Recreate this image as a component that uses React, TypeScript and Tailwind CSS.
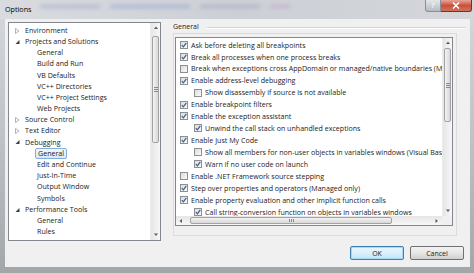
import React from 'react';

type TreeItem = {
  label: string;
  level: 0 | 1;
  state?: 'open' | 'closed';
  selected?: boolean;
};

const tree: TreeItem[] = [
  { label: 'Environment', level: 0, state: 'closed' },
  { label: 'Projects and Solutions', level: 0, state: 'open' },
  { label: 'General', level: 1 },
  { label: 'Build and Run', level: 1 },
  { label: 'VB Defaults', level: 1 },
  { label: 'VC++ Directories', level: 1 },
  { label: 'VC++ Project Settings', level: 1 },
  { label: 'Web Projects', level: 1 },
  { label: 'Source Control', level: 0, state: 'closed' },
  { label: 'Text Editor', level: 0, state: 'closed' },
  { label: 'Debugging', level: 0, state: 'open' },
  { label: 'General', level: 1, selected: true },
  { label: 'Edit and Continue', level: 1 },
  { label: 'Just-In-Time', level: 1 },
  { label: 'Output Window', level: 1 },
  { label: 'Symbols', level: 1 },
  { label: 'Performance Tools', level: 0, state: 'open' },
  { label: 'General', level: 1 },
  { label: 'Rules', level: 1 },
];

type Opt = { label: string; level: 0 | 1; checked: boolean };

const options: Opt[] = [
  { label: 'Ask before deleting all breakpoints', level: 0, checked: true },
  { label: 'Break all processes when one process breaks', level: 0, checked: true },
  { label: 'Break when exceptions cross AppDomain or managed/native boundaries (Managed only)', level: 0, checked: false },
  { label: 'Enable address-level debugging', level: 0, checked: true },
  { label: 'Show disassembly if source is not available', level: 1, checked: false },
  { label: 'Enable breakpoint filters', level: 0, checked: true },
  { label: 'Enable the exception assistant', level: 0, checked: true },
  { label: 'Unwind the call stack on unhandled exceptions', level: 1, checked: true },
  { label: 'Enable Just My Code', level: 0, checked: true },
  { label: 'Show all members for non-user objects in variables windows (Visual Basic only)', level: 1, checked: false },
  { label: 'Warn if no user code on launch', level: 1, checked: true },
  { label: 'Enable .NET Framework source stepping', level: 0, checked: false },
  { label: 'Step over properties and operators (Managed only)', level: 0, checked: true },
  { label: 'Enable property evaluation and other implicit function calls', level: 0, checked: true },
  { label: 'Call string-conversion function on objects in variables windows', level: 1, checked: true },
];

function Arrow({ dir }: { dir: 'up' | 'down' | 'left' | 'right' }) {
  const pts = {
    up: '1,4 3,1.5 5,4',
    down: '1,1.5 3,4 5,1.5',
    left: '4,1 1.5,3 4,5',
    right: '1.5,1 4,3 1.5,5',
  }[dir];
  return (
    <svg width="6" height="6" viewBox="0 0 6 6">
      <polygon points={pts} fill="#5a5a5a" />
    </svg>
  );
}

function VScroll({ thumbTop, thumbH }: { thumbTop: number; thumbH: number }) {
  return (
    <div className="relative w-[10px] h-full bg-gradient-to-r from-[#e6e6e6] to-[#f7f7f7] border-l border-[#ececec]">
      <div className="h-[10px] flex items-center justify-center">
        <Arrow dir="up" />
      </div>
      <div
        className="absolute left-[1px] right-[1px] rounded-[2px] border border-[#a2a2a2] bg-gradient-to-r from-[#f4f4f4] to-[#d8d8d8] flex items-center justify-center"
        style={{ top: thumbTop, height: thumbH }}
      >
        <div className="flex flex-col gap-[1px]">
          <div className="w-[4px] h-px bg-[#8a8a8a]" />
          <div className="w-[4px] h-px bg-[#8a8a8a]" />
          <div className="w-[4px] h-px bg-[#8a8a8a]" />
        </div>
      </div>
      <div className="absolute bottom-0 left-0 right-0 h-[10px] flex items-center justify-center">
        <Arrow dir="down" />
      </div>
    </div>
  );
}

function CheckBox({ checked }: { checked: boolean }) {
  return (
    <div className="w-[8px] h-[8px] border border-[#8f8f8f] bg-gradient-to-br from-[#d8dbe0] to-[#fbfbfb] flex items-center justify-center shrink-0">
      {checked && (
        <svg width="6" height="6" viewBox="0 0 6 6">
          <path d="M0.8 3.2 L2.4 4.9 L5.3 0.9" stroke="#3e5a8e" strokeWidth="1.2" fill="none" />
        </svg>
      )}
    </div>
  );
}

export default function App() {
  return (
    <div className="w-[474px] h-[273px] overflow-hidden flex flex-col bg-gradient-to-b from-[#d5d8dc] via-[#bfc3c7] to-[#a3a6a9] font-['Open_Sans',sans-serif] text-[7.1px] text-[#1b1b1b]">
      {/* title bar */}
      <div className="h-[19px] shrink-0 flex items-start relative bg-gradient-to-r from-[#d9dbdf] via-[#ccd0d6] to-[#d4d6da]">
        <span className="pl-[5px] pt-[4px] text-[7.2px] text-black">Options</span>
        <div className="absolute top-0 left-[40px] h-[12px] w-[300px] blur-[2px] opacity-40 flex gap-[10px] items-center">
          <div className="w-[60px] h-[3px] bg-[#7a86b8]" />
          <div className="w-[80px] h-[3px] bg-[#6f7fc0]" />
          <div className="w-[60px] h-[3px] bg-[#8a7ab0]" />
          <div className="w-[20px] h-[3px] bg-[#c07ac0]" />
        </div>
        <div className="ml-auto mr-[2px] flex">
          <div className="w-[16px] h-[12px] rounded-bl-[3px] border border-[#8a8f96] border-t-0 bg-gradient-to-b from-[#e4e7ea] to-[#b6bcc3] flex items-center justify-center text-[7px] font-bold text-[#f4f4f4] leading-none">
            ?
          </div>
          <div className="w-[31px] h-[12px] rounded-br-[3px] border border-[#7a2d25] border-t-0 border-l-0 bg-gradient-to-b from-[#e8a494] via-[#c8503e] to-[#d2715a] flex items-center justify-center">
            <svg width="8" height="7" viewBox="0 0 8 7">
              <path d="M1 0.5 L7 6.5 M7 0.5 L1 6.5" stroke="#ffffff" strokeWidth="1.6" />
            </svg>
          </div>
        </div>
      </div>

      {/* client */}
      <div className="flex-1 mx-[4px] ml-[5px] bg-[#f0f0f0] flex flex-col">
        <div className="flex items-start">
          {/* tree */}
          <div className="ml-[3px] mt-[3px] w-[153px] h-[219px] border border-[#828790] bg-white flex">
            <div className="flex-1 pt-[1.5px] relative">
              {tree.map((t, i) => (
                <div key={i} className="h-[11.2px] flex items-center relative">
                  {t.level === 0 && (
                    <span className="absolute left-[6px] top-[3px]">
                      {t.state === 'closed' ? (
                        <svg width="5" height="6" viewBox="0 0 5 6">
                          <polygon points="0.5,0.5 4,3 0.5,5.5" fill="#ffffff" stroke="#a0a0a0" strokeWidth="0.8" />
                        </svg>
                      ) : (
                        <svg width="5" height="6" viewBox="0 0 5 6">
                          <polygon points="4.5,1 4.5,5 0.5,5" fill="#3c3c3c" />
                        </svg>
                      )}
                    </span>
                  )}
                  {t.selected ? (
                    <span className="ml-[26px] px-[2px] h-[11px] flex items-center border border-[#84acdd] rounded-[2px] bg-gradient-to-b from-[#f2f8fe] to-[#d6e8fc]">
                      {t.label}
                    </span>
                  ) : (
                    <span className={t.level === 0 ? 'ml-[16px]' : 'ml-[28px]'}>{t.label}</span>
                  )}
                </div>
              ))}
            </div>
            <VScroll thumbTop={13} thumbH={107} />
          </div>

          {/* right panel */}
          <div className="ml-[12px] flex-1 flex flex-col">
            <div className="h-[11px] mt-[3px] flex items-center">
              <span className="text-[7px]">General</span>
              <div className="flex-1 ml-[8px] mr-[4px] h-[2px] border-t border-[#d5d5d5] border-b border-b-white" />
            </div>
            <div className="w-[284px] h-[203px] border border-[#dcdcdc] pl-[1px] pt-[3px]">
              <div className="w-[278px] h-[189px] border border-[#828790] bg-white flex flex-col">
                <div className="flex flex-1 min-h-0">
                  <div className="flex-1 overflow-hidden pt-[1px]">
                    {options.map((o, i) => (
                      <div key={i} className="h-[11.93px] flex items-center whitespace-nowrap">
                        <div className={o.level === 0 ? 'ml-[4px]' : 'ml-[18px]'}>
                          <CheckBox checked={o.checked} />
                        </div>
                        <span className="ml-[3px]">{o.label}</span>
                      </div>
                    ))}
                  </div>
                  <VScroll thumbTop={10} thumbH={74} />
                </div>
                <div className="h-[9px] flex">
                  <div className="relative flex-1 bg-gradient-to-b from-[#e6e6e6] to-[#f7f7f7]">
                    <div className="absolute left-0 top-0 w-[10px] h-full flex items-center justify-center">
                      <Arrow dir="left" />
                    </div>
                    <div className="absolute left-[14px] w-[202px] top-[1px] bottom-[1px] rounded-[2px] border border-[#a2a2a2] bg-gradient-to-b from-[#f4f4f4] to-[#d8d8d8] flex items-center justify-center gap-[1px]">
                      <div className="w-px h-[3px] bg-[#8a8a8a]" />
                      <div className="w-px h-[3px] bg-[#8a8a8a]" />
                      <div className="w-px h-[3px] bg-[#8a8a8a]" />
                    </div>
                    <div className="absolute right-0 top-0 w-[10px] h-full flex items-center justify-center">
                      <Arrow dir="right" />
                    </div>
                  </div>
                  <div className="w-[10px] bg-[#f0f0f0]" />
                </div>
              </div>
            </div>
          </div>
        </div>

        {/* buttons */}
        <div className="mt-[5px] flex justify-end gap-[6px] pr-[6px]">
          <button className="w-[54px] h-[14px] rounded-[2px] border border-[#3c7fb1] bg-gradient-to-b from-[#eaf6fd] via-[#d9f0fc] to-[#bee6fd] shadow-[0_0_0_1px_#a7d9f5_inset] text-[7px] leading-none">
            OK
          </button>
          <button className="w-[54px] h-[14px] rounded-[2px] border border-[#707070] bg-gradient-to-b from-[#f2f2f2] via-[#e6e6e6] to-[#cfcfcf] text-[7px] leading-none">
            Cancel
          </button>
        </div>
      </div>
      <div className="h-[6px] shrink-0" />
    </div>
  );
}
